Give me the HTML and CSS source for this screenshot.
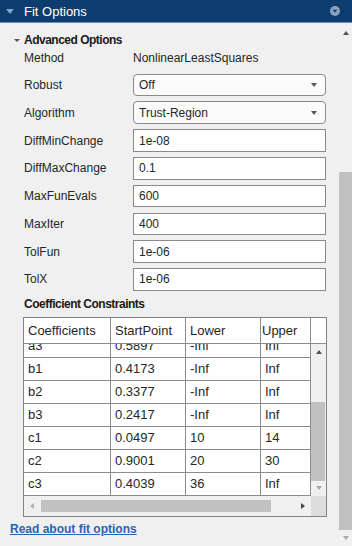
FILE: index.html
```html
<html lang="en"><head>
    <meta charset="UTF-8">
    <meta name="viewport" content="width=device-width, initial-scale=1.0">
    <title>Fit Options</title>
    <link rel="stylesheet" href="styles.css">
  </head>
  <body>
    <div class="panel">
      <!-- Title Bar -->
      <div class="titlebar">
        <span class="tb-caret"></span>
        <span class="tb-title">Fit Options</span>
        <span class="tb-menu">
          <svg width="10" height="10" viewBox="0 0 10 10"><circle cx="5" cy="5" r="5" fill="#8aa2bc"></circle><path d="M2.7 3.7h4.6L5 6.7z" fill="#0d3d6e"></path></svg>
        </span>
      </div>

      <div class="panel-body">
        <div class="content">
          <!-- Advanced Options -->
          <div class="section-head"><span class="caret"></span>Advanced Options</div>
          <div class="form">
            <div class="label">Method</div>
            <div class="value">NonlinearLeastSquares</div>

            <div class="label">Robust</div>
            <div class="select">Off<span class="tri-down"></span></div>

            <div class="label">Algorithm</div>
            <div class="select">Trust-Region<span class="tri-down"></span></div>

            <div class="label">DiffMinChange</div>
            <input class="field" type="text" value="1e-08">

            <div class="label">DiffMaxChange</div>
            <input class="field" type="text" value="0.1">

            <div class="label">MaxFunEvals</div>
            <input class="field" type="text" value="600">

            <div class="label">MaxIter</div>
            <input class="field" type="text" value="400">

            <div class="label">TolFun</div>
            <input class="field" type="text" value="1e-06">

            <div class="label">TolX</div>
            <input class="field" type="text" value="1e-06">
          </div>

          <!-- Coefficient Constraints -->
          <div class="sub-head">Coefficient Constraints</div>
          <div class="coef-table">
            <div class="thead">
              <div class="th">Coefficients</div>
              <div class="th">StartPoint</div>
              <div class="th">Lower</div>
              <div class="th th-narrow">Upper</div>
              <div class="th th-end"></div>
            </div>
            <div class="tbody">
              <div class="rows-view">
                <div class="rows">
                  <div class="tr"><div class="td">a3</div><div class="td">0.5897</div><div class="td">-Inf</div><div class="td td-narrow">Inf</div></div>
                  <div class="tr"><div class="td">b1</div><div class="td">0.4173</div><div class="td">-Inf</div><div class="td td-narrow">Inf</div></div>
                  <div class="tr"><div class="td">b2</div><div class="td">0.3377</div><div class="td">-Inf</div><div class="td td-narrow">Inf</div></div>
                  <div class="tr"><div class="td">b3</div><div class="td">0.2417</div><div class="td">-Inf</div><div class="td td-narrow">Inf</div></div>
                  <div class="tr"><div class="td">c1</div><div class="td">0.0497</div><div class="td">10</div><div class="td td-narrow">14</div></div>
                  <div class="tr"><div class="td">c2</div><div class="td">0.9001</div><div class="td">20</div><div class="td td-narrow">30</div></div>
                  <div class="tr"><div class="td">c3</div><div class="td">0.4039</div><div class="td">36</div><div class="td td-narrow">Inf</div></div>
                </div>
              </div>
              <div class="vbar">
                <div class="vbar-up"><span class="tri-up"></span></div>
                <div class="vbar-thumb"></div>
                <div class="vbar-down"><span class="tri-down light"></span></div>
              </div>
            </div>
            <div class="hbar-row">
              <div class="hbar">
                <div class="hbar-btn"><span class="tri-left light"></span></div>
                <div class="hbar-thumb"></div>
                <div class="hbar-btn end"><span class="tri-right"></span></div>
              </div>
              <div class="corner"></div>
            </div>
          </div>

          <a class="help-link" href="#">Read about fit options</a>
        </div>

        <!-- Panel Scrollbar -->
        <div class="scrollbar">
          <div class="sb-up"><span class="tri-up"></span></div>
          <div class="sb-thumb"></div>
          <div class="sb-down"><span class="tri-down light"></span></div>
        </div>
      </div>
    </div>
  </body></html>
```

FILE: styles.css
```css
/* General Styling */
body {
  margin: 0;
  padding: 0;
  font-family: "Liberation Sans", Arial, sans-serif;
  color: #262626;
}

.panel {
  width: 352px;
  height: 546px;
  background-color: #f0f0f0;
  display: flex;
  flex-direction: column;
  overflow: hidden;
}

/* Title Bar */
.titlebar {
  height: 22px;
  flex-shrink: 0;
  background-color: #0d3d6e;
  border-bottom: 1px solid #5f93c9;
  display: flex;
  align-items: center;
  color: #ffffff;
  font-size: 13px;
}

.tb-caret {
  margin-left: 6px;
  width: 0;
  height: 0;
  border-left: 4.5px solid transparent;
  border-right: 4.5px solid transparent;
  border-top: 5px solid #7fa2c6;
}

.tb-title {
  margin-left: 10px;
}

.tb-menu {
  margin-left: auto;
  margin-right: 12px;
  display: flex;
}

/* Body */
.panel-body {
  flex: 1;
  display: flex;
}

.content {
  width: 339px;
  display: flex;
  flex-direction: column;
}

.section-head {
  margin-top: 9px;
  height: 16px;
  padding-left: 14px;
  display: flex;
  align-items: center;
  font-size: 12px;
  font-weight: bold;
  letter-spacing: -0.5px;
  color: #1a1a1a;
}

.caret {
  width: 0;
  height: 0;
  margin-right: 4px;
  border-left: 3px solid transparent;
  border-right: 3px solid transparent;
  border-top: 3.5px solid #555;
}

/* Form Grid */
.form {
  display: grid;
  grid-template-columns: 109px 193px;
  grid-template-rows: 20.5px;
  grid-auto-rows: 22.6px;
  row-gap: 5.2px;
  padding-left: 24px;
  font-size: 12px;
  align-items: center;
}

.label,
.value {
  white-space: nowrap;
}

.select {
  height: 100%;
  box-sizing: border-box;
  border: 1px solid #8a8a8a;
  border-radius: 4px;
  background-color: #fbfbfb;
  display: flex;
  align-items: center;
  justify-content: space-between;
  padding: 0 8px 0 5px;
}

.field {
  height: 100%;
  width: 100%;
  box-sizing: border-box;
  margin: 0;
  border: 1px solid #8a8a8a;
  border-radius: 0;
  background-color: #ffffff;
  padding: 0 0 0 5px;
  font-family: "Liberation Sans", Arial, sans-serif;
  font-size: 12px;
  color: #262626;
  outline: none;
}

/* Arrows */
.tri-down,
.tri-up,
.tri-left,
.tri-right {
  width: 0;
  height: 0;
  display: block;
}

.tri-down {
  border-left: 3.5px solid transparent;
  border-right: 3.5px solid transparent;
  border-top: 4px solid #555;
}

.tri-up {
  border-left: 3.5px solid transparent;
  border-right: 3.5px solid transparent;
  border-bottom: 4px solid #555;
}

.tri-left {
  border-top: 3.5px solid transparent;
  border-bottom: 3.5px solid transparent;
  border-right: 4px solid #555;
}

.tri-right {
  border-top: 3.5px solid transparent;
  border-bottom: 3.5px solid transparent;
  border-left: 4px solid #444;
}

.tri-down.light {
  border-top-color: #a8a8a8;
}

.tri-left.light {
  border-right-color: #b0b0b0;
}

/* Coefficient Table */
.sub-head {
  margin-top: 5px;
  height: 16px;
  line-height: 16px;
  padding-left: 24px;
  font-size: 12px;
  font-weight: bold;
  letter-spacing: -0.5px;
  color: #1a1a1a;
}

.coef-table {
  margin: 5px 0 0 23px;
  width: 304px;
  box-sizing: border-box;
  border: 1px solid #828282;
  background-color: #ffffff;
  font-size: 13px;
}

.thead {
  display: grid;
  grid-template-columns: 87px 75px 75px 50px 15px;
  height: 26px;
  box-sizing: border-box;
  border-bottom: 1px solid #8c8c8c;
}

.th {
  line-height: 25px;
  padding-left: 4px;
  border-right: 1px solid #8c8c8c;
  color: #1f1f1f;
  white-space: nowrap;
  overflow: hidden;
}

.th-narrow,
.td-narrow {
  padding-left: 1px;
}

.th-end {
  border-right: none;
}

.tbody {
  display: flex;
  height: 152px;
}

.rows-view {
  width: 287px;
  height: 152px;
  overflow: hidden;
}

.rows {
  margin-top: -9px;
}

.tr {
  display: grid;
  grid-template-columns: 87px 75px 75px 50px;
  height: 23px;
  box-sizing: border-box;
  border-bottom: 1px solid #8c8c8c;
}

.td {
  line-height: 22px;
  padding-left: 4px;
  border-right: 1px solid #8c8c8c;
  white-space: nowrap;
  overflow: hidden;
}

/* Table Scrollbars */
.vbar {
  width: 15px;
  background-color: #f0f0f0;
  display: flex;
  flex-direction: column;
}

.vbar-up {
  height: 16px;
  display: flex;
  justify-content: center;
  align-items: center;
  margin-bottom: 42px;
}

.vbar-thumb {
  height: 79px;
  width: 14px;
  background-color: #c1c1c1;
}

.vbar-down {
  flex: 1;
  display: flex;
  justify-content: center;
  align-items: center;
}

.hbar-row {
  display: flex;
  height: 20px;
}

.hbar {
  width: 287px;
  background-color: #f0f0f0;
  display: flex;
  align-items: center;
}

.hbar-btn {
  width: 16px;
  height: 100%;
  display: flex;
  justify-content: center;
  align-items: center;
}

.hbar-btn.end {
  margin-left: auto;
}

.hbar-thumb {
  margin-left: 1px;
  width: 230px;
  height: 12px;
  background-color: #c1c1c1;
}

.corner {
  flex: 1;
  background-color: #dcdcdc;
}

/* Help Link */
.help-link {
  margin: 4px 0 0 10px;
  align-self: flex-start;
  line-height: 16px;
  font-size: 12px;
  font-weight: bold;
  color: #2566b0;
  text-decoration: underline;
}

/* Panel Scrollbar */
.scrollbar {
  width: 13px;
  display: flex;
  flex-direction: column;
}

.sb-up {
  height: 20px;
  display: flex;
  justify-content: center;
  align-items: center;
  margin-bottom: 129px;
}

.sb-thumb {
  height: 358px;
  background-color: #c1c1c1;
}

.sb-down {
  flex: 1;
  display: flex;
  justify-content: center;
  align-items: center;
}
```
